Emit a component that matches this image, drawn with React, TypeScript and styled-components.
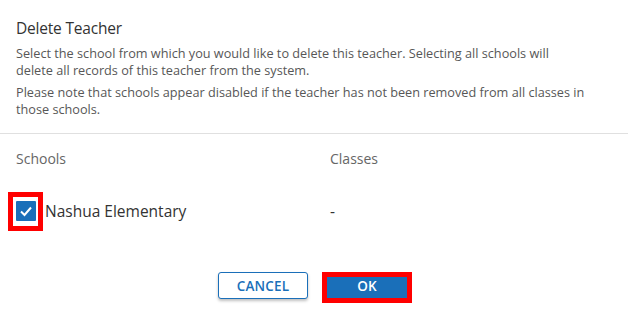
import React, { useState } from 'react';
import styled, { createGlobalStyle } from 'styled-components';

const GlobalStyle = createGlobalStyle`
  html, body {
    margin: 0;
    padding: 0;
    background: #fff;
  }
  body {
    font-family: "Open Sans", Lato, sans-serif;
    color: #333;
  }
`;

const Dialog = styled.div`
  width: 628px;
  height: 333px;
  display: flex;
  flex-direction: column;
`;

const Header = styled.div`
  padding: 18px 16px 0;
  height: 134px;
  box-sizing: border-box;
  border-bottom: 1px solid #e0e0e0;
`;

const Title = styled.h2`
  margin: 0 0 7px;
  font-size: 15.5px;
  font-weight: 400;
  letter-spacing: -0.2px;
  line-height: 20px;
  color: #333;
`;

const Text = styled.p`
  margin: 0 0 5px;
  max-width: 572px;
  font-size: 12.7px;
  line-height: 17px;
  color: #575757;
`;

const Grid = styled.div`
  display: grid;
  grid-template-columns: 314px 1fr;
  padding: 0 16px;
`;

const HeadCell = styled.div`
  padding-top: 16px;
  height: 57px;
  box-sizing: border-box;
  font-size: 14px;
  line-height: 18px;
  color: #666;
`;

const Cell = styled.div`
  display: flex;
  align-items: center;
  height: 40px;
  font-size: 15.5px;
  color: #333;
`;

const CheckOutline = styled.label`
  display: flex;
  align-items: center;
  justify-content: center;
  box-sizing: border-box;
  width: 35px;
  height: 39px;
  margin-left: -8px;
  margin-right: 2px;
  border: 5px solid #f00;
  cursor: pointer;
`;

const Box = styled.span<{ $checked: boolean }>`
  display: flex;
  align-items: center;
  justify-content: center;
  width: 20px;
  height: 20px;
  border-radius: 1px;
  background: ${(p) => (p.$checked ? '#1a6fb9' : '#fff')};
  border: ${(p) => (p.$checked ? 'none' : '1px solid #888')};
`;

const Actions = styled.div`
  display: flex;
  justify-content: center;
  align-items: flex-start;
  gap: 14px;
  padding-top: 41px;
  padding-left: 2px;
`;

const Button = styled.button`
  font-family: "Open Sans", Lato, sans-serif;
  font-size: 13.5px;
  font-weight: 600;
  letter-spacing: 0.2px;
  cursor: pointer;
  box-sizing: border-box;
`;

const Cancel = styled(Button)`
  width: 90px;
  height: 27px;
  background: #fff;
  color: #1a6fb9;
  border: 1px solid #1a6fb9;
  border-radius: 3px;
  box-shadow: 0 2px 3px rgba(0, 0, 0, 0.25);
`;

const Ok = styled(Button)`
  width: 90px;
  height: 31px;
  background: #1a6fb9;
  color: #fff;
  border: 5px solid #f00;
  border-radius: 0;
  padding: 0 0 4px;
`;

const App = () => {
  const [checked, setChecked] = useState(true);

  return (
    <Dialog>
      <GlobalStyle />
      <Header>
        <Title>Delete Teacher</Title>
        <Text>
          Select the school from which you would like to delete this teacher. Selecting all schools will
          delete all records of this teacher from the system.
        </Text>
        <Text>
          Please note that schools appear disabled if the teacher has not been removed from all classes in
          those schools.
        </Text>
      </Header>
      <Grid>
        <HeadCell>Schools</HeadCell>
        <HeadCell>Classes</HeadCell>
        <Cell>
          <CheckOutline onClick={() => setChecked(!checked)}>
            <Box $checked={checked}>
              {checked && (
                <svg width="14" height="14" viewBox="0 0 14 14">
                  <path d="M2 7.5 L5.5 11 L12 3.5" fill="none" stroke="#fff" strokeWidth="2" />
                </svg>
              )}
            </Box>
          </CheckOutline>
          Nashua Elementary
        </Cell>
        <Cell>-</Cell>
      </Grid>
      <Actions>
        <Cancel>CANCEL</Cancel>
        <Ok>OK</Ok>
      </Actions>
    </Dialog>
  );
};

export default App;
